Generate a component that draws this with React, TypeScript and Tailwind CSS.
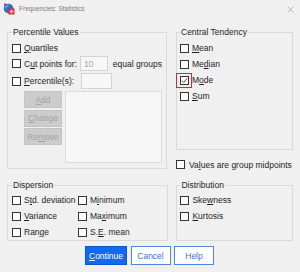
import React from "react";

function Box({ checked }: { checked?: boolean }) {
  return (
    <span className="w-[9px] h-[9px] border border-[#333333] bg-white shrink-0 flex items-center justify-center">
      {checked && (
        <svg width="7" height="7" viewBox="0 0 7 7">
          <path d="M0.8 3.6 L2.7 5.5 L6.3 1.2" fill="none" stroke="#333333" strokeWidth="0.9" />
        </svg>
      )}
    </span>
  );
}

function Check({ children, checked }: { children: React.ReactNode; checked?: boolean }) {
  return (
    <div className="flex items-center gap-[3px] h-[16px] whitespace-nowrap">
      <Box checked={checked} />
      <span>{children}</span>
    </div>
  );
}

function DisabledBtn({ children }: { children: React.ReactNode }) {
  return (
    <div className="h-[17px] w-[38px] bg-[#cccccc] border border-[#c4c4c4] text-[#a2a2a2] flex items-center justify-center">
      {children}
    </div>
  );
}

export default function App() {
  return (
    <div className="w-[300px] h-[272px] bg-[#f0f0f0] text-[#1e1e1e] text-[8.5px] leading-[10px] font-['Liberation_Sans',Arial,sans-serif] flex flex-col overflow-hidden">
      {/* Title bar */}
      <div className="h-[18px] flex items-center pl-[3px] pr-[6px]">
        <svg width="12" height="12" viewBox="0 0 12 12" className="shrink-0">
          <circle cx="5.5" cy="5.5" r="4.8" fill="#2f6fc4" />
          <path d="M2.5 5.5 A3 3 0 0 1 5.5 2.5" fill="none" stroke="#9fc3f0" strokeWidth="1" />
          <rect x="5.5" y="5.5" width="6" height="6" fill="#d92b3a" />
          <rect x="7.8" y="6.5" width="1.4" height="4" fill="#f5b5bd" />
          <rect x="6.5" y="7.8" width="4" height="1.4" fill="#f5b5bd" />
          <rect x="1" y="0.5" width="2" height="2" fill="#d92b3a" />
        </svg>
        <span className="ml-[4px] text-[6.5px] text-[#7c7c7c]">Frequencies: Statistics</span>
        <svg width="7" height="7" viewBox="0 0 7 7" className="ml-auto">
          <path d="M0.5 0.5 L6.5 6.5 M6.5 0.5 L0.5 6.5" stroke="#9a9a9a" strokeWidth="0.7" />
        </svg>
      </div>

      <div className="px-[7px] mt-[9px] flex flex-col">
        {/* Top row */}
        <div className="flex gap-[9px] items-start">
          <fieldset className="border border-[#d9d9d9] px-[4px] w-[161px] h-[142px] min-w-0">
            <legend className="px-[1px] leading-[10px]">Percentile Values</legend>
            <div className="flex flex-col">
              <div className="mt-[4px] h-[14px] flex items-center gap-[3px]">
                <Box />
                <span>
                  <u>Q</u>uartiles
                </span>
              </div>
              <div className="mt-[1px] h-[15px] flex items-center gap-[3px] whitespace-nowrap">
                <Box />
                <span className="w-[54px]">
                  C<u>u</u>t points for:
                </span>
                <div className="w-[31px] h-[15px] border border-[#d3d3d3] bg-[#f7f7f7] text-[#a8a8a8] pl-[3px] flex items-center">
                  10
                </div>
                <span className="ml-[2px]">equal groups</span>
              </div>
              <div className="mt-[2px] h-[16px] flex items-center gap-[3px] whitespace-nowrap">
                <Box />
                <span className="w-[54px]">
                  <u>P</u>ercentile(s):
                </span>
                <div className="w-[31px] h-[16px] border border-[#d3d3d3] bg-[#f7f7f7]" />
              </div>
              <div className="mt-[2px] pl-[12px] flex gap-[3px]">
                <div className="flex flex-col gap-[1.5px]">
                  <DisabledBtn>
                    <u>A</u>dd
                  </DisabledBtn>
                  <DisabledBtn>
                    <u>C</u>hange
                  </DisabledBtn>
                  <DisabledBtn>
                    Re<u>m</u>ove
                  </DisabledBtn>
                </div>
                <div className="w-[97px] h-[72px] border border-[#dadada] bg-[#f6f6f6]" />
              </div>
            </div>
          </fieldset>

          <div className="flex flex-col">
            <fieldset className="border border-[#d9d9d9] px-[3px] w-[117px] h-[123px] min-w-0">
              <legend className="px-[1px] leading-[10px]">Central Tendency</legend>
              <div className="mt-[3px] flex flex-col">
                <Check>
                  <u>M</u>ean
                </Check>
                <Check>
                  Me<u>d</u>ian
                </Check>
                <div className="flex items-center gap-[3px] h-[16px]">
                  <span className="relative flex">
                    <Box checked />
                    <span className="absolute -left-[4px] -right-[3px] -top-[3px] -bottom-[3px] border-[1.5px] border-[#e0232c]" />
                  </span>
                  <span>
                    M<u>o</u>de
                  </span>
                </div>
                <Check>
                  <u>S</u>um
                </Check>
              </div>
            </fieldset>
            <div className="mt-[10px] h-[9px] flex items-center gap-[4px] whitespace-nowrap">
              <Box />
              <span>
                Va<u>l</u>ues are group midpoints
              </span>
            </div>
          </div>
        </div>

        {/* Bottom row */}
        <div className="mt-[11px] flex gap-[8px] items-start">
          <fieldset className="border border-[#d9d9d9] px-[4px] w-[162px] h-[61px] min-w-0">
            <legend className="px-[1px] leading-[10px]">Dispersion</legend>
            <div className="mt-[2px] grid grid-cols-[66px_auto]">
              <Check>
                S<u>t</u>d. deviation
              </Check>
              <Check>
                M<u>i</u>nimum
              </Check>
              <Check>
                <u>V</u>ariance
              </Check>
              <Check>
                Ma<u>x</u>imum
              </Check>
              <Check>
                Ran<u>g</u>e
              </Check>
              <Check>
                S.<u>E</u>. mean
              </Check>
            </div>
          </fieldset>
          <fieldset className="border border-[#d9d9d9] px-[3px] w-[117px] h-[61px] min-w-0">
            <legend className="px-[1px] leading-[10px]">Distribution</legend>
            <div className="mt-[2px] flex flex-col">
              <Check>
                Ske<u>w</u>ness
              </Check>
              <Check>
                <u>K</u>urtosis
              </Check>
            </div>
          </fieldset>
        </div>

        {/* Buttons */}
        <div className="mt-[5px] flex justify-center gap-[3.5px] pr-[1px]">
          <div className="w-[42px] h-[19px] bg-[#1467f0] border border-[#0b55d6] text-white flex items-center justify-center">
            <span>
              <u>C</u>ontinue
            </span>
          </div>
          <div className="w-[40px] h-[19px] bg-white border border-[#4f86e8] text-[#3a6fd6] flex items-center justify-center">
            Cancel
          </div>
          <div className="w-[40px] h-[19px] bg-white border border-[#4f86e8] text-[#3a6fd6] flex items-center justify-center">
            Help
          </div>
        </div>
      </div>
    </div>
  );
}
